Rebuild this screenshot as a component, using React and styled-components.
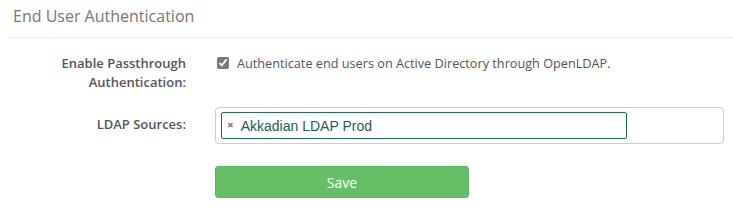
import React from 'react';
import styled, { createGlobalStyle } from 'styled-components';

const GlobalStyle = createGlobalStyle`
    body {
        margin: 0;
        background: #fff;
        font-family: "Open Sans", sans-serif;
    }
`;

const Panel = styled.div`
    width: 733px;
    height: 209px;
    overflow: hidden;
`;

const Heading = styled.h3`
    margin: 0 0 0 9px;
    padding: 6px 0 11px 4px;
    font-size: 16px;
    font-weight: 400;
    line-height: 20px;
    color: #777;
    border-bottom: 1px dotted #ddd;
`;

const Form = styled.div`
    display: grid;
    grid-template-columns: 186px 1fr;
    column-gap: 29px;
    padding: 14px 10px 0 0;
`;

const Label = styled.label`
    text-align: right;
    font-size: 13px;
    font-weight: 600;
    line-height: 19px;
    color: #555;
    padding-top: ${props => props.$top || 0}px;
`;

const Field = styled.div`
    display: flex;
    align-items: flex-start;
    padding-top: ${props => props.$top || 0}px;
    min-height: ${props => props.$height || 0}px;
`;

const Check = styled.input`
    margin: 3px 8px 0 2px;
    width: 12px;
    height: 12px;
    accent-color: #777;
`;

const CheckText = styled.span`
    font-size: 12.7px;
    line-height: 19px;
    color: #555;
`;

const SelectBox = styled.div`
    box-sizing: border-box;
    width: 509px;
    height: 37px;
    border: 1px solid #ccc;
    border-radius: 4px;
    padding: 5px;
    display: flex;
    align-items: center;
`;

const Tag = styled.div`
    box-sizing: border-box;
    width: 406px;
    height: 27px;
    border: 1px solid #1f6b58;
    border-radius: 2px;
    display: flex;
    align-items: center;
    padding-left: 5px;
    font-family: "Liberation Sans", Arial, sans-serif;
    font-size: 14px;
    color: #1c5f55;
`;

const Remove = styled.span`
    color: #888;
    font-family: "DejaVu Sans", sans-serif;
    font-size: 8px;
    margin-right: 7px;
`;

const SaveButton = styled.button`
    box-sizing: border-box;
    width: 254px;
    height: 32px;
    border: 1px solid #5cb85c;
    border-radius: 3px;
    background: #66bf66;
    color: #fff;
    font-family: "Open Sans", sans-serif;
    font-size: 14px;
    cursor: pointer;
`;

export default function App() {
    return (
        <Panel>
            <GlobalStyle />
            <Heading>End User Authentication</Heading>
            <Form>
                <Label $top={2}>Enable Passthrough<br />Authentication:</Label>
                <Field $top={2} $height={53}>
                    <Check type="checkbox" defaultChecked />
                    <CheckText>Authenticate end users on Active Directory through OpenLDAP.</CheckText>
                </Field>
                <Label $top={8}>LDAP Sources:</Label>
                <Field>
                    <SelectBox>
                        <Tag><Remove>✖</Remove>Akkadian LDAP Prod</Tag>
                    </SelectBox>
                </Field>
                <div />
                <Field $top={22}>
                    <SaveButton>Save</SaveButton>
                </Field>
            </Form>
        </Panel>
    );
}
